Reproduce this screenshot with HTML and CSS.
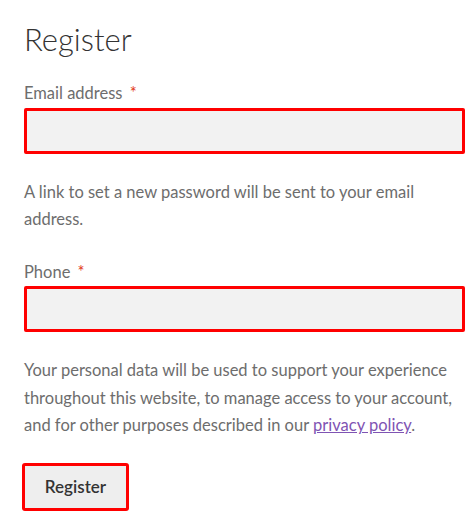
FILE: index.html
```html
<!DOCTYPE html>
<html lang="en">
<head>
<meta charset="utf-8">
<title>Register</title>
<link rel="stylesheet" href="styles.css">
</head>
<body>
<div class="page">
  <h2 class="title">Register</h2>
  <form class="register">
    <div class="field">
      <label class="label" for="email">Email address <span class="required">*</span></label>
      <input class="input" id="email" type="email">
    </div>
    <p class="note">A link to set a new password will be sent to your email address.</p>
    <div class="field">
      <label class="label" for="phone">Phone <span class="required">*</span></label>
      <input class="input" id="phone" type="tel">
    </div>
    <p class="note">Your personal data will be used to support your experience throughout this website, to manage access to your account, and for other purposes described in our <a class="link" href="#">privacy policy</a>.</p>
    <button class="button" type="button">Register</button>
  </form>
</div>
</body>
</html>
```
FILE: styles.css
```css
html, body {
  margin: 0;
  padding: 0;
  background: #ffffff;
}
.page {
  padding: 19px 9px 0 24px;
  font-family: Lato, "Liberation Sans", sans-serif;
  font-size: 16.5px;
  line-height: 27.5px;
  color: #6d6d6d;
}
.title {
  margin: 0 0 21px;
  font-size: 31px;
  line-height: 40px;
  font-weight: 300;
  color: #333333;
}
.register {
  display: flex;
  flex-direction: column;
  align-items: flex-start;
}
.field {
  display: flex;
  flex-direction: column;
  align-self: stretch;
}
.label {
  display: block;
}
.required {
  color: #e2401c;
  margin-left: 3px;
}
.input {
  box-sizing: border-box;
  width: 100%;
  height: 46px;
  margin: 0;
  background: #f2f2f2;
  border: 3px solid #ff0000;
  border-radius: 2px;
  outline: none;
}
.note {
  margin: 25px 0 25px;
}
.link {
  color: #7f54b3;
  text-decoration: underline;
}
.button {
  box-sizing: border-box;
  width: 107px;
  height: 48px;
  margin: -2px 0 0 -2px;
  padding: 0;
  background: #eeeeee;
  color: #333333;
  border: 3px solid #ff0000;
  border-radius: 3px;
  font-family: Lato, "Liberation Sans", sans-serif;
  font-size: 17px;
  font-weight: 600;
}
```
